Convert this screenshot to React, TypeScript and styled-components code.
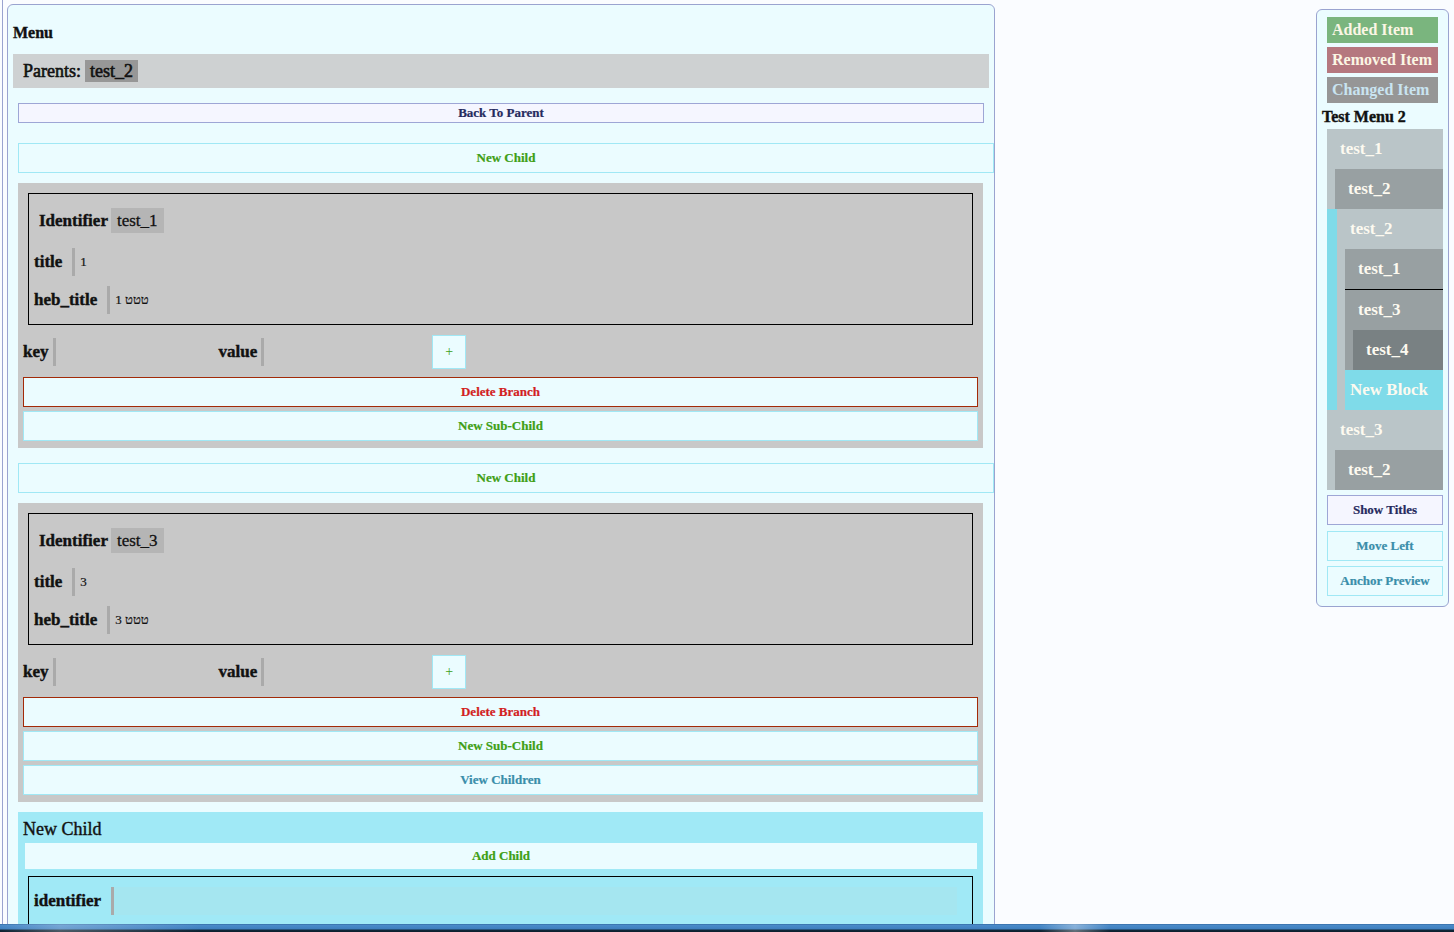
import styled, { createGlobalStyle, css } from "styled-components";

const serif = `"Liberation Serif", "DejaVu Serif", serif`;

const GlobalStyle = createGlobalStyle`
  * {
    box-sizing: border-box;
  }
  html, body {
    margin: 0;
    height: 100%;
    overflow: hidden;
    background: #fafcff;
    font-family: ${serif};
    color: #111;
  }
`;

const heavy = css`
  -webkit-text-stroke: 0.4px currentColor;
`;

const Page = styled.div`
  display: flex;
  justify-content: space-between;
  align-items: flex-start;
  height: 100vh;
`;

const Frame = styled.div`
  margin-left: 2px;
  padding-left: 4px;
  border-left: 1px solid #9aa3d0;
  height: 100vh;
`;

const MenuPanel = styled.div`
  width: 988px;
  margin-top: 4px;
  min-height: 100vh;
  padding: 0 5px;
  background: #ebfcff;
  border: 1px solid #9aa3d0;
  border-radius: 6px 6px 0 0;
`;

const MenuTitle = styled.div`
  margin-top: 18px;
  font-size: 16px;
  line-height: 20px;
  font-weight: 700;
  ${heavy}
`;

const ParentsBar = styled.div`
  display: flex;
  align-items: center;
  height: 34px;
  margin-top: 11px;
  padding-left: 10px;
  background: #ced1d2;
  font-size: 18px;
  -webkit-text-stroke: 0.6px #111;
`;

const ParentChip = styled.span`
  margin-left: 4px;
  height: 22px;
  line-height: 22px;
  padding: 0 5px;
  background: #979797;
`;

type Tone = "navy" | "green" | "red" | "teal";

const toneColor: Record<Tone, string> = {
  navy: "#262b60",
  green: "#3f9f16",
  red: "#d21f1f",
  teal: "#3a8eaa",
};

const Button = styled.button<{ tone: Tone }>`
  display: block;
  width: 100%;
  font-family: ${serif};
  font-size: 13px;
  font-weight: 700;
  color: ${(p) => toneColor[p.tone]};
  background: #ebfcff;
  border: 1px solid #a0e8f5;
  padding: 0;
  cursor: pointer;
  -webkit-text-stroke: 0.2px currentColor;

  ${(p) =>
    p.tone === "navy"
      ? css`
          background: #f5f6ff;
          border-color: #9ea6d6;
        `
      : ""}
  ${(p) =>
    p.tone === "red"
      ? css`
          border-color: #a32a08;
        `
      : ""}
`;

const BackButton = styled(Button)`
  margin: 15px 5px 0;
  width: calc(100% - 10px);
  height: 20px;
`;

const NewChildButton = styled(Button)<{ again?: boolean }>`
  margin: ${(p) => (p.again ? 15 : 20)}px 0 10px 5px;
  height: 30px;
`;

const ActionButton = styled(Button)`
  height: 30px;
  margin-top: 4px;
`;

const DeleteButton = styled(ActionButton)`
  margin-top: 8px;
`;

const ChildBlock = styled.div`
  margin: 0 6px 0 5px;
  padding: 5px 5px 7px;
  background: #c8c8c8;
`;

const FieldBox = styled.div`
  margin: 5px;
  padding: 0 5px 10px;
  border: 1px solid #000;
`;

const IdentRow = styled.div`
  display: flex;
  align-items: center;
  height: 25px;
  margin: 14px 0 0 5px;
  font-size: 17px;
`;

const IdentLabel = styled.span`
  font-weight: 700;
  margin-right: 3px;
  ${heavy}
`;

const IdentChip = styled.span`
  height: 25px;
  line-height: 25px;
  padding: 0 6px;
  background: #b5b5b5;
  -webkit-text-stroke: 0.3px currentColor;
`;

const FieldRow = styled.div<{ first?: boolean }>`
  display: flex;
  align-items: center;
  height: 28px;
  margin-top: ${(p) => (p.first ? 15 : 10)}px;
`;

const FieldLabel = styled.span`
  font-size: 17px;
  font-weight: 700;
  margin-right: 10px;
  ${heavy}
`;

const FieldInput = styled.div<{ fill?: boolean }>`
  height: 28px;
  line-height: 28px;
  padding-left: 5px;
  border-left: 3px solid #aaaaaa;
  font-size: 13px;
  font-family: ${serif};
  -webkit-text-stroke: 0.2px currentColor;
  ${(p) =>
    p.fill
      ? css`
          width: 846px;
          background: #a5e6f0;
        `
      : ""}
`;

const KeyRow = styled.div`
  display: flex;
  align-items: center;
  height: 34px;
  margin-top: 10px;
`;

const KeyLabel = styled.span`
  font-size: 17px;
  font-weight: 700;
  margin-right: 4px;
  ${heavy}
`;

const KeyInput = styled.div<{ w: number }>`
  width: ${(p) => p.w}px;
  height: 28px;
  margin-right: 3px;
  border-left: 3px solid #aaaaaa;
`;

const PlusButton = styled.button`
  width: 34px;
  height: 34px;
  padding: 0;
  background: #ebfcff;
  border: 1px solid #a0e8f5;
  color: #3f9f16;
  font-family: ${serif};
  font-size: 14px;
`;

const NewChildForm = styled.div`
  margin: 10px 6px 0 5px;
  padding: 0 5px 5px;
  background: #a0e9f6;
`;

const FormTitle = styled.div`
  height: 25px;
  line-height: 25px;
  padding-top: 5px;
  box-sizing: content-box;
  font-size: 18px;
  -webkit-text-stroke: 0.4px currentColor;
`;

const AddChildButton = styled(Button)`
  height: 28px;
  margin-left: 1px;
  width: calc(100% - 1px);
  border-color: #a0e9f6;
`;

const FormBox = styled(FieldBox)`
  margin-top: 6px;
  height: 80px;
`;

const Taskbar = styled.div`
  position: fixed;
  left: 0;
  right: 0;
  bottom: 0;
  height: 8px;
  background:
    linear-gradient(
      to right,
      rgba(255, 255, 255, 0) 0,
      rgba(255, 255, 255, 0.25) 60px,
      rgba(255, 255, 255, 0) 200px,
      rgba(255, 255, 255, 0) 1040px,
      rgba(255, 255, 255, 0.35) 1075px,
      rgba(255, 255, 255, 0) 1110px
    ),
    linear-gradient(
      to bottom,
      #2f6298 0,
      #4a8bca 1px,
      #3f7fbe 5px,
      #10283a 6px,
      #0c1e2c 8px
    );
`;

/* right side panel */

const SidePanel = styled.div`
  width: 133px;
  margin: 9px 5px 0 0;
  padding: 7px 5px 10px 10px;
  background: #ebfcff;
  border: 1px solid #9aa3d0;
  border-radius: 6px;
`;

type Legend = "added" | "removed" | "changed";

const legendColors: Record<Legend, [string, string]> = {
  added: ["#7ab57e", "#fbf6e4"],
  removed: ["#b5787f", "#fbf6e4"],
  changed: ["#969696", "#c9e4f1"],
};

const LegendItem = styled.div<{ kind: Legend }>`
  width: 111px;
  height: 26px;
  line-height: 26px;
  margin-bottom: 4px;
  padding-left: 5px;
  font-size: 16px;
  font-weight: 700;
  white-space: nowrap;
  background: ${(p) => legendColors[p.kind][0]};
  color: ${(p) => legendColors[p.kind][1]};
`;

const SideTitle = styled.div`
  margin: -2px 0 0 -5px;
  height: 24px;
  line-height: 24px;
  font-size: 16px;
  font-weight: 700;
  white-space: nowrap;
  ${heavy}
`;

const depthColors = ["#bac5c8", "#98a0a2", "#798183"];

const TreeItem = styled.div<{ depth: number; highlight?: boolean }>`
  background: ${(p) => depthColors[p.depth]};
  ${(p) =>
    p.highlight
      ? css`
          border-left: 10px solid #7fdbe9;
        `
      : ""}
`;

const TreeLabel = styled.div<{ divider?: boolean; fresh?: boolean }>`
  height: 40px;
  line-height: 40px;
  padding-left: 13px;
  font-size: 17px;
  font-weight: 700;
  color: #fdfaf0;
  white-space: nowrap;
  box-sizing: content-box;
  ${(p) =>
    p.divider
      ? css`
          border-bottom: 1px solid #000;
        `
      : ""}
  ${(p) =>
    p.fresh
      ? css`
          padding-left: 5px;
          background: #7fdbe9;
        `
      : ""}
`;

const TreeChildren = styled.div`
  padding-left: 8px;
`;

const SideButton = styled(Button)<{ gap?: number }>`
  height: 30px;
  margin-top: ${(p) => p.gap ?? 5}px;
  white-space: nowrap;
`;

type Node = {
  label: string;
  children?: Node[];
  highlight?: boolean;
  divider?: boolean;
  fresh?: boolean;
};

const tree: Node[] = [
  { label: "test_1", children: [{ label: "test_2" }] },
  {
    label: "test_2",
    highlight: true,
    children: [
      { label: "test_1", divider: true },
      { label: "test_3", children: [{ label: "test_4" }] },
      { label: "New Block", fresh: true },
    ],
  },
  { label: "test_3", children: [{ label: "test_2" }] },
];

const TreeNode = ({ node, depth }: { node: Node; depth: number }) => (
  <TreeItem depth={depth} highlight={node.highlight}>
    <TreeLabel divider={node.divider} fresh={node.fresh}>
      {node.label}
    </TreeLabel>
    {node.children ? (
      <TreeChildren>
        {node.children.map((c, i) => (
          <TreeNode key={i} node={c} depth={depth + 1} />
        ))}
      </TreeChildren>
    ) : null}
  </TreeItem>
);

type Child = { id: string; title: string; heb: string; viewChildren?: boolean };

const children: Child[] = [
  { id: "test_1", title: "1", heb: "1 טטט" },
  { id: "test_3", title: "3", heb: "3 טטט", viewChildren: true },
];

const ChildCard = ({ child }: { child: Child }) => (
  <ChildBlock>
    <FieldBox>
      <IdentRow>
        <IdentLabel>Identifier</IdentLabel>
        <IdentChip>{child.id}</IdentChip>
      </IdentRow>
      <FieldRow first>
        <FieldLabel>title</FieldLabel>
        <FieldInput>{child.title}</FieldInput>
      </FieldRow>
      <FieldRow>
        <FieldLabel>heb_title</FieldLabel>
        <FieldInput>{child.heb}</FieldInput>
      </FieldRow>
    </FieldBox>
    <KeyRow>
      <KeyLabel>key</KeyLabel>
      <KeyInput w={163} />
      <KeyLabel>value</KeyLabel>
      <KeyInput w={168} />
      <PlusButton>+</PlusButton>
    </KeyRow>
    <DeleteButton tone="red">Delete Branch</DeleteButton>
    <ActionButton tone="green">New Sub-Child</ActionButton>
    {child.viewChildren ? <ActionButton tone="teal">View Children</ActionButton> : null}
  </ChildBlock>
);

export default function App() {
  return (
    <>
      <GlobalStyle />
      <Page>
        <Frame>
          <MenuPanel>
            <MenuTitle>Menu</MenuTitle>
            <ParentsBar>
              Parents:
              <ParentChip>test_2</ParentChip>
            </ParentsBar>
            <BackButton tone="navy">Back To Parent</BackButton>
            <NewChildButton tone="green">New Child</NewChildButton>
            <ChildCard child={children[0]} />
            <NewChildButton tone="green" again>
              New Child
            </NewChildButton>
            <ChildCard child={children[1]} />
            <NewChildForm>
              <FormTitle>New Child</FormTitle>
              <AddChildButton tone="green">Add Child</AddChildButton>
              <FormBox>
                <FieldRow>
                  <FieldLabel>identifier</FieldLabel>
                  <FieldInput fill />
                </FieldRow>
              </FormBox>
            </NewChildForm>
          </MenuPanel>
        </Frame>
        <SidePanel>
          <LegendItem kind="added">Added Item</LegendItem>
          <LegendItem kind="removed">Removed Item</LegendItem>
          <LegendItem kind="changed">Changed Item</LegendItem>
          <SideTitle>Test Menu 2</SideTitle>
          <div>
            {tree.map((n, i) => (
              <TreeNode key={i} node={n} depth={0} />
            ))}
          </div>
          <SideButton tone="navy">Show Titles</SideButton>
          <SideButton tone="teal" gap={6}>
            Move Left
          </SideButton>
          <SideButton tone="teal">Anchor Preview</SideButton>
        </SidePanel>
      </Page>
      <Taskbar />
    </>
  );
}
